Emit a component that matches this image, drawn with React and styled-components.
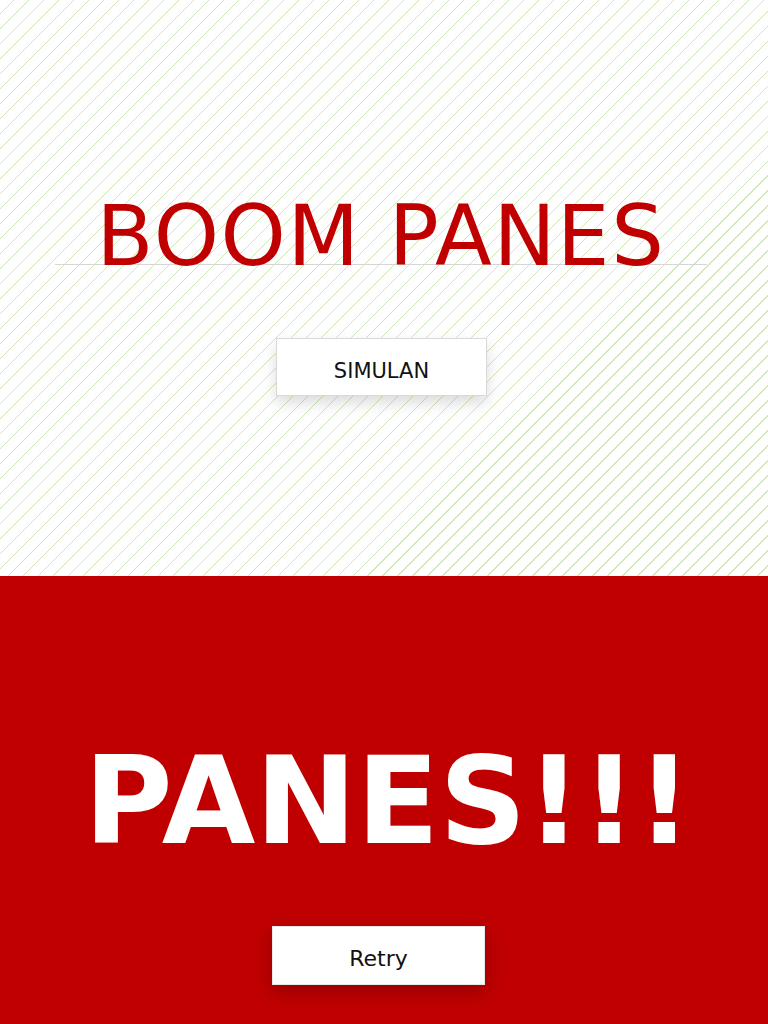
import styled, { createGlobalStyle } from "styled-components";

const GlobalStyle = createGlobalStyle`
  html, body {
    margin: 0;
    padding: 0;
  }
  body {
    font-family: "DejaVu Sans", "Liberation Sans", sans-serif;
    background: #ffffff;
  }
`;

const Page = styled.div`
  display: flex;
  flex-direction: column;
  width: 768px;
  height: 1024px;
  overflow: hidden;
`;

const Intro = styled.section`
  height: 576px;
  display: flex;
  flex-direction: column;
  align-items: center;
  padding-top: 209px;
  box-sizing: border-box;
  background-color: #ffffff;
  background-image: repeating-linear-gradient(
    135deg,
    rgba(255, 255, 255, 0) 0px,
    rgba(255, 255, 255, 0) 9.6px,
    #d0e8b6 9.6px,
    #d0e8b6 10.6px
  );
`;

const Title = styled.h1`
  margin: 0 6px 0 0;
  width: 652px;
  text-align: center;
  font-size: 83px;
  font-weight: 400;
  line-height: 55px;
  letter-spacing: 1.6px;
  color: #c00000;
  border-bottom: 1px solid #d6d6d6;
  white-space: nowrap;
`;

const Button = styled.button`
  width: ${p => p.$w}px;
  height: ${p => p.$h}px;
  margin-top: ${p => p.$top}px;
  margin-right: ${p => p.$nudge}px;
  padding: ${p => p.$drop}px 0 0;
  background: #ffffff;
  border: 1px solid ${p => (p.$onRed ? "#e8e8e8" : "#d9d9d9")};
  border-radius: 0;
  font-family: "DejaVu Sans", sans-serif;
  font-size: ${p => p.$size}px;
  color: #111111;
  box-shadow: ${p =>
    p.$onRed
      ? "0 6px 18px rgba(0, 0, 0, 0.24)"
      : "0 7px 14px rgba(0, 0, 0, 0.14)"};
  cursor: pointer;
`;

const Result = styled.section`
  flex: 1;
  display: flex;
  flex-direction: column;
  align-items: center;
  padding-top: 165px;
  background: #c00000;
`;

const Shout = styled.h2`
  margin: 0 0 0 8px;
  font-size: 121px;
  font-weight: 700;
  line-height: 121px;
  color: #ffffff;
  white-space: nowrap;
`;

export default function App() {
  return (
    <Page>
      <GlobalStyle />
      <Intro>
        <Title>BOOM PANES</Title>
        <Button $w={211} $h={58} $top={73} $nudge={5} $size={21} $drop={7}>
          SIMULAN
        </Button>
      </Intro>
      <Result>
        <Shout>PANES!!!</Shout>
        <Button $onRed $w={213} $h={59} $top={64} $nudge={11} $size={22} $drop={6}>
          Retry
        </Button>
      </Result>
    </Page>
  );
}
